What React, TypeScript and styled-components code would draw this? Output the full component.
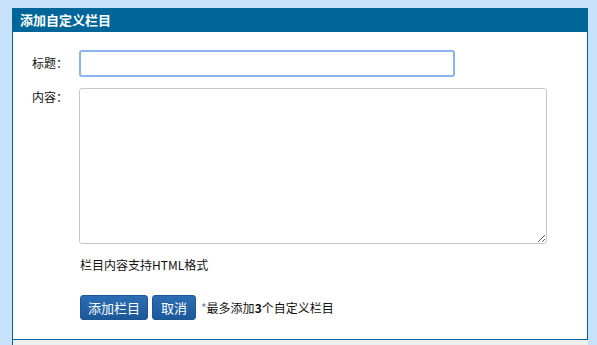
import React from "react";
import styled, { createGlobalStyle } from "styled-components";

const Global = createGlobalStyle`
  html, body { margin: 0; padding: 0; }
  body {
    background: #c7e1fb;
    font-family: "Noto Sans CJK SC", "Noto Sans", sans-serif;
    font-size: 12px;
    color: #111;
  }
`;

const Page = styled.div`
  padding: 8px 9px 0 12px;
`;

const Panel = styled.section`
  width: 576px;
  background: #fff;
`;

const Header = styled.h2`
  margin: 0;
  height: 24px;
  line-height: 24px;
  padding-left: 8px;
  background: #006699;
  color: #fff;
  font-size: 13px;
  font-weight: bold;
`;

const Body = styled.div`
  border: 1px solid #006699;
  border-top: none;
  padding: 18px 0 19px 0;
`;

const Row = styled.div<{ $gap?: number }>`
  display: flex;
  align-items: flex-start;
  margin-top: ${(p) => p.$gap ?? 0}px;
`;

const Label = styled.label<{ $top: number }>`
  width: 47px;
  padding-left: 19px;
  padding-top: ${(p) => p.$top}px;
  line-height: 16px;
  flex: none;
`;

const TextInput = styled.input`
  box-sizing: border-box;
  width: 376px;
  height: 27px;
  margin: 0;
  border: 2px solid #8db2f0;
  border-radius: 3px;
  outline: none;
  font: inherit;
  padding: 0 4px;
`;

const TextArea = styled.textarea`
  box-sizing: border-box;
  width: 468px;
  height: 156px;
  margin: 0;
  border: 1px solid #c8c8c8;
  border-radius: 3px;
  outline: none;
  font: inherit;
  padding: 4px;
  display: block;
`;

const Hint = styled.div`
  margin: 13px 0 0 67px;
  line-height: 16px;
`;

const Actions = styled.div`
  margin: 22px 0 0 67px;
  display: flex;
  align-items: center;
`;

const Button = styled.button<{ $w: number }>`
  box-sizing: border-box;
  width: ${(p) => p.$w}px;
  height: 25px;
  margin: 0 4px 0 0;
  padding: 0;
  border: 1px solid #1b5797;
  border-radius: 3px;
  background: linear-gradient(#2c6db3, #1c5899);
  color: #fff;
  font: inherit;
  font-size: 13px;
  cursor: pointer;
`;

const Note = styled.span`
  margin-left: 1px;
  line-height: 16px;
`;

const Star = styled.span`
  color: #6a88aa;
`;

const Footer = styled.div`
  height: 6px;
  background: #eeeeee;
  border-left: 1px solid #006699;
`;

export default function App() {
  return (
    <>
      <Global />
      <Page>
        <Panel>
          <Header>添加自定义栏目</Header>
          <Body>
            <Row>
              <Label $top={5}>标题：</Label>
              <TextInput type="text" />
            </Row>
            <Row $gap={11}>
              <Label $top={1}>内容：</Label>
              <TextArea />
            </Row>
            <Hint>栏目内容支持HTML格式</Hint>
            <Actions>
              <Button $w={68}>添加栏目</Button>
              <Button $w={44}>取消</Button>
              <Note>
                <Star>*</Star>最多添加<b>3</b>个自定义栏目
              </Note>
            </Actions>
          </Body>
          <Footer />
        </Panel>
      </Page>
    </>
  );
}
